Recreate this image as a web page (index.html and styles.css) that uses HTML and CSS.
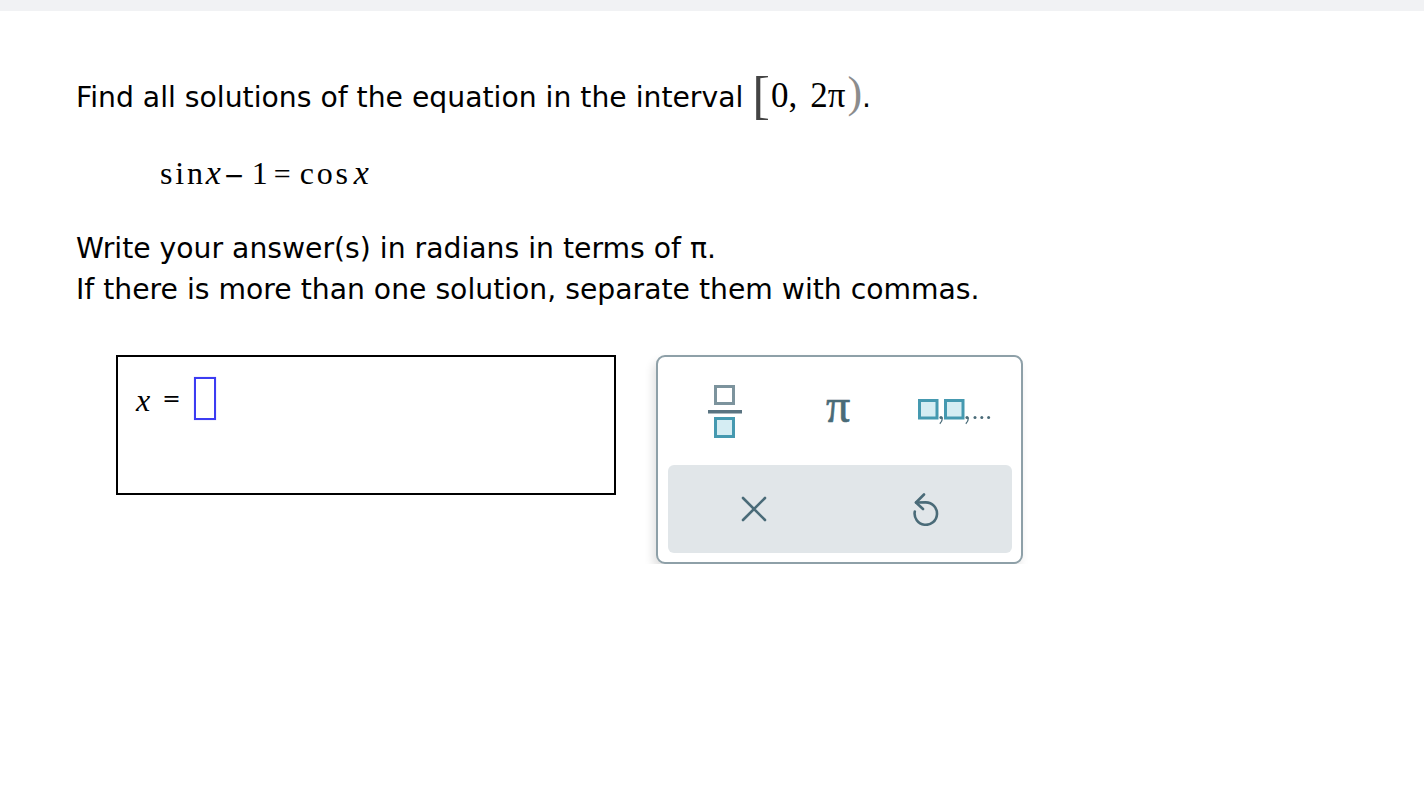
FILE: index.html
```html
<!DOCTYPE html>
<html>
<head>
<meta charset="utf-8">
<link rel="stylesheet" href="styles.css">
</head>
<body>
<div class="topbar"></div>
<main class="content">
  <p class="prompt">Find all solutions of the equation in the interval <span class="math interval"><span class="bracket">[</span>0<span class="comma">,</span>2π<span class="paren">)</span></span>.</p>
  <div class="equation math"><span class="fn">sin</span><i class="v">x</i><span class="minus">−</span><span class="num">1</span><span class="equals">=</span><span class="fn">cos</span><i class="v last">x</i></div>
  <p class="instr">Write your answer(s) in radians in terms of π.<br>If there is more than one solution, separate them with commas.</p>
  <div class="answer-row">
    <div class="answer-box">
      <span class="math var">x</span>
      <span class="eq">=</span>
      <span class="slot"></span>
    </div>
    <div class="keypad">
      <div class="keys">
        <button class="key" aria-label="fraction">
          <svg width="34" height="54" viewBox="0 0 34 54">
            <rect x="7.5" y="1.5" width="18" height="17" fill="#fff" stroke="#7c939d" stroke-width="3"/>
            <rect x="0" y="25" width="34" height="3.5" fill="#5a7481"/>
            <rect x="7.5" y="33.5" width="18" height="18" fill="#d5edf3" stroke="#4599b0" stroke-width="3"/>
          </svg>
        </button>
        <button class="key pi" aria-label="pi">π</button>
        <button class="key" aria-label="list">
          <svg width="74" height="26" viewBox="0 0 74 26">
            <rect x="1.5" y="1.5" width="17.5" height="17.5" fill="#d5edf3" stroke="#4599b0" stroke-width="3"/>
            <rect x="27.5" y="1.5" width="17.5" height="17.5" fill="#d5edf3" stroke="#4599b0" stroke-width="3"/>
            <circle cx="23" cy="18.5" r="1.6" fill="#4a6b78"/>
            <path d="M24.4 18.6 Q24.4 22.5 21.8 24.8" fill="none" stroke="#4a6b78" stroke-width="1.3"/>
            <circle cx="49" cy="18.5" r="1.6" fill="#4a6b78"/>
            <path d="M50.4 18.6 Q50.4 22.5 47.8 24.8" fill="none" stroke="#4a6b78" stroke-width="1.3"/>
            <circle cx="57" cy="18.5" r="1.5" fill="#4a6b78"/>
            <circle cx="63.8" cy="18.5" r="1.5" fill="#4a6b78"/>
            <circle cx="70.6" cy="18.5" r="1.5" fill="#4a6b78"/>
          </svg>
        </button>
      </div>
      <div class="actions">
        <button class="act" aria-label="clear">
          <svg width="26" height="26" viewBox="0 0 26 26"><path d="M2 2 L24 24 M24 2 L2 24" stroke="#4a6b78" stroke-width="2.6" stroke-linecap="round"/></svg>
        </button>
        <button class="act" aria-label="undo">
          <svg width="30" height="34" viewBox="0 0 30 34"><path d="M5 10.5 L14.8 10.4 A11.2 11.2 0 1 1 3.8 19.5" fill="none" stroke="#4a6b78" stroke-width="2.6" stroke-linecap="round" stroke-linejoin="round"/><path d="M13 2.5 L5 10.5 L12 17" fill="none" stroke="#4a6b78" stroke-width="2.6" stroke-linecap="round" stroke-linejoin="round"/></svg>
        </button>
      </div>
    </div>
  </div>
</main>
</body>
</html>
```
FILE: styles.css
```css
* { box-sizing: border-box; }
html, body { margin: 0; padding: 0; background: #fff; }
body { font-family: "DejaVu Sans", Verdana, sans-serif; color: #000; }
.topbar { height: 11px; background: #f1f2f4; }
.content { padding: 66px 0 0 76px; }
.prompt { margin: 0; font-size: 28.25px; line-height: 41px; }
.math { font-family: "Liberation Serif", "Times New Roman", serif; }
.interval { font-size: 35px; line-height: 0; }
.interval .comma { margin-right: 13px; }
.bracket { font-size: 53px; color: #444; vertical-align: -6px; line-height: 0; margin-right: 1px; }
.paren { font-size: 44px; color: #8c8c8c; line-height: 0; margin-left: 2px; }
.equation { font-size: 32px; margin: 35px 0 0 84px; line-height: 40px; height: 40px; }
.equation span, .equation i { line-height: 0; }
.equation .fn { letter-spacing: 2.8px; }
.equation .v { font-style: italic; font-size: 34px; }
.equation .last { margin-left: 3px; }
.equation .minus { font-family: "DejaVu Sans", sans-serif; font-size: 25px; margin: 0 7px 0 3px; }
.equation .num { margin-right: 6px; }
.equation .equals { font-size: 30px; margin-right: 9px; }
.instr { margin: 35px 0 0; font-size: 28.25px; line-height: 41px; }
.answer-row { display: flex; align-items: flex-start; gap: 40px; margin: 45px 0 0 40px; }
.answer-box { width: 500px; height: 140px; border: 2px solid #000; padding: 20px 0 0 18px; display: flex; align-items: flex-start; }
.var { font-style: italic; font-size: 32px; line-height: 32px; margin-top: 7px; }
.eq { font-size: 22px; line-height: 22px; margin: 11px 13px 0 12px; }
.slot { width: 22px; height: 43px; border: 2.5px solid #3c3cf2; box-shadow: 0 0 1px rgba(60,60,242,0.4); }
.keypad { width: 367px; height: 209px; border: 2px solid #8ea0a8; border-radius: 9px; background: #fff; box-shadow: -3px 6px 10px rgba(0,0,0,0.12); padding: 0 9px 9px 10px; display: flex; flex-direction: column; }
.keys { display: flex; height: 108px; align-items: center; padding-top: 2px; }
.key { flex: 1; background: none; border: 0; padding: 0; display: flex; justify-content: center; align-items: center; }
.pi { font-family: "Liberation Serif", "Times New Roman", serif; font-size: 48px; line-height: 40px; color: #4a6b78; -webkit-text-stroke: 0.6px #4a6b78; padding: 0 4px 12px 0; }
.actions { flex: 1; background: #e1e6e9; border-radius: 6px; display: flex; align-items: center; }
.act { flex: 1; background: none; border: 0; padding: 0; display: flex; justify-content: center; align-items: center; }
```
